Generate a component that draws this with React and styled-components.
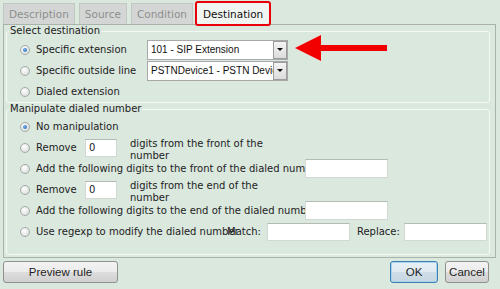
import React from "react";
import styled, { createGlobalStyle, css } from "styled-components";

const GlobalStyle = createGlobalStyle`
  html, body { margin: 0; padding: 0; background: #dae8de; }
  body {
    width: 500px; height: 289px; overflow: hidden;
    font-family: "DejaVu Sans", Verdana, sans-serif;
    font-size: 10px; color: #222;
  }
  * { box-sizing: border-box; }
`;

const Page = styled.div`
  position: relative;
  width: 500px;
  height: 289px;
`;

const TabBar = styled.div`
  display: flex;
  gap: 4px;
  padding: 3px 0 0 3px;
  height: 24px;
`;

const Tab = styled.div`
  height: 21px;
  padding: 0 5px;
  display: flex;
  align-items: center;
  font-size: 10.5px;
  border: 1px solid #c3c8c5;
  border-bottom: none;
  background: #d3d6d4;
  color: #8e8e8e;
  ${(p) =>
    p.$active &&
    css`
      background: #f1f5f2;
      color: #111;
      border-color: #f1f5f2;
      outline: 2.5px solid #e8000a;
      outline-offset: 0;
      border-radius: 1px;
    `}
`;

const Panel = styled.div`
  margin-left: 3px;
  width: 493px;
  height: 234px;
  border: 1px solid #a9b3ac;
  padding: 0 5px 2px 2px;
  display: flex;
  flex-direction: column;
`;

const Fieldset = styled.fieldset`
  margin: 0;
  border: 1px solid #f5f9f6;
  border-radius: 3px;
  padding: 0 0 0 2px;
  flex: ${(p) => (p.$grow ? 1 : "none")};
  min-width: 0;
`;

const Legend = styled.legend`
  padding: 0 1px;
  line-height: 12px;
  color: #222;
`;

const Rows = styled.div`
  padding-top: ${(p) => p.$pt}px;
  display: flex;
  flex-direction: column;
`;

const Row = styled.div`
  display: flex;
  align-items: center;
  height: 21px;
  padding-left: 11px;
  white-space: nowrap;
`;

const Radio = styled.span`
  position: relative;
  flex: none;
  width: 10px;
  height: 10px;
  border-radius: 50%;
  border: 1px solid #a3aaa6;
  background: radial-gradient(circle at 40% 35%, #ffffff 0%, #e4e7e5 60%, #cdd1cf 100%);
  margin-right: 6px;
  ${(p) =>
    p.$checked &&
    css`
      &::after {
        content: "";
        position: absolute;
        left: 2px;
        top: 2px;
        width: 4px;
        height: 4px;
        border-radius: 50%;
        background: radial-gradient(circle at 40% 40%, #6fb0f0, #1f5fa6);
      }
    `}
`;

const Label = styled.span`
  flex: none;
  width: ${(p) => (p.$w ? p.$w + "px" : "auto")};
  overflow: ${(p) => (p.$clip ? "hidden" : "visible")};
  white-space: nowrap;
  line-height: 12px;
`;

const SelectBox = styled.div`
  display: flex;
  width: 141px;
  height: 20px;
  border: 1px solid #a8a8a8;
  background: #fff;
  font-family: "Liberation Sans", Arial, sans-serif;
  font-size: 10px;
  color: #111;
`;

const SelectValue = styled.div`
  flex: 1;
  overflow: hidden;
  white-space: nowrap;
  padding-left: 3px;
  line-height: 18px;
`;

const SelectButton = styled.div`
  flex: none;
  width: 14px;
  border: 1px solid #9c9c9c;
  background: linear-gradient(#f4f4f4, #dcdcdc);
  display: flex;
  align-items: center;
  justify-content: center;
  &::after {
    content: "";
    border-left: 3px solid transparent;
    border-right: 3px solid transparent;
    border-top: 3px solid #111;
  }
`;

const TextInput = styled.input`
  flex: none;
  width: ${(p) => p.$w}px;
  height: ${(p) => p.$h || 19}px;
  margin: 0 0 0 ${(p) => p.$ml || 0}px;
  border: 1px solid #d2d8d4;
  border-top-color: #b4bbb6;
  background: #fff;
  padding: 0 3px;
  font-family: "DejaVu Sans", Verdana, sans-serif;
  font-size: 10px;
  color: #222;
  outline: none;
`;

const Digits = styled.span`
  flex: none;
  align-self: flex-start;
  margin: 1px 0 0 13px;
  width: 145px;
  line-height: 12px;
  white-space: normal;
`;

const InlineLabel = styled.span`
  flex: none;
  margin-left: ${(p) => p.$ml || 0}px;
  line-height: 12px;
`;

const Footer = styled.div`
  display: flex;
  justify-content: space-between;
  padding: 3px 11px 0 3px;
`;

const ButtonGroup = styled.div`
  display: flex;
  gap: 7px;
`;

const Button = styled.button`
  height: 22px;
  width: ${(p) => p.$w}px;
  padding: 0;
  font-family: "Liberation Sans", Arial, sans-serif;
  font-size: 11.5px;
  color: #1e1e1e;
  border: 1px solid #8f9190;
  border-radius: 3px;
  background: linear-gradient(#f3f3f3 0%, #ebebeb 50%, #dddddd 51%, #d0d0d0 100%);
  ${(p) =>
    p.$default &&
    css`
      border-color: #3d7fb2;
      background: linear-gradient(#e9f1f6 0%, #dfe9f0 50%, #cfdde7 51%, #c6d6e2 100%);
      box-shadow: inset 0 0 0 1px #a9d4f0;
    `}
`;

const Arrow = styled.svg`
  position: absolute;
  left: 295px;
  top: 35px;
`;

export default function App() {
  return (
    <Page>
      <GlobalStyle />
      <TabBar>
        <Tab>Description</Tab>
        <Tab>Source</Tab>
        <Tab>Condition</Tab>
        <Tab $active>Destination</Tab>
      </TabBar>
      <Panel>
        <Fieldset>
          <Legend>Select destination</Legend>
          <Rows $pt={2}>
            <Row>
              <Radio $checked />
              <Label $w={111}>Specific extension</Label>
              <SelectBox>
                <SelectValue>101 - SIP Extension</SelectValue>
                <SelectButton />
              </SelectBox>
            </Row>
            <Row>
              <Radio />
              <Label $w={111}>Specific outside line</Label>
              <SelectBox>
                <SelectValue>PSTNDevice1 - PSTN Device</SelectValue>
                <SelectButton />
              </SelectBox>
            </Row>
            <Row>
              <Radio />
              <Label>Dialed extension</Label>
            </Row>
          </Rows>
        </Fieldset>
        <Fieldset $grow>
          <Legend>Manipulate dialed number</Legend>
          <Rows $pt={1}>
            <Row>
              <Radio $checked />
              <Label>No manipulation</Label>
            </Row>
            <Row>
              <Radio />
              <Label $w={49}>Remove</Label>
              <TextInput $w={32} $h={18} defaultValue="0" />
              <Digits>digits from the front of the number</Digits>
            </Row>
            <Row>
              <Radio />
              <Label $w={269} $clip>
                Add the following digits to the front of the dialed number
              </Label>
              <TextInput $w={83} />
            </Row>
            <Row>
              <Radio />
              <Label $w={49}>Remove</Label>
              <TextInput $w={32} $h={18} defaultValue="0" />
              <Digits>digits from the end of the number</Digits>
            </Row>
            <Row>
              <Radio />
              <Label $w={269} $clip>
                Add the following digits to the end of the dialed number
              </Label>
              <TextInput $w={83} />
            </Row>
            <Row>
              <Radio />
              <Label $w={191}>Use regexp to modify the dialed number</Label>
              <InlineLabel>Match:</InlineLabel>
              <TextInput $w={83} $h={18} $ml={6} />
              <InlineLabel $ml={7}>Replace:</InlineLabel>
              <TextInput $w={83} $h={18} $ml={4} />
            </Row>
          </Rows>
        </Fieldset>
      </Panel>
      <Footer>
        <Button $w={115}>Preview rule</Button>
        <ButtonGroup>
          <Button $w={48} $default>OK</Button>
          <Button $w={44}>Cancel</Button>
        </ButtonGroup>
      </Footer>
      <Arrow width="94" height="27" viewBox="0 0 94 27">
        <polygon points="0,13 26,0 26,26" fill="#f20000" />
        <rect x="25" y="10" width="67" height="6" fill="#f20000" />
      </Arrow>
    </Page>
  );
}
